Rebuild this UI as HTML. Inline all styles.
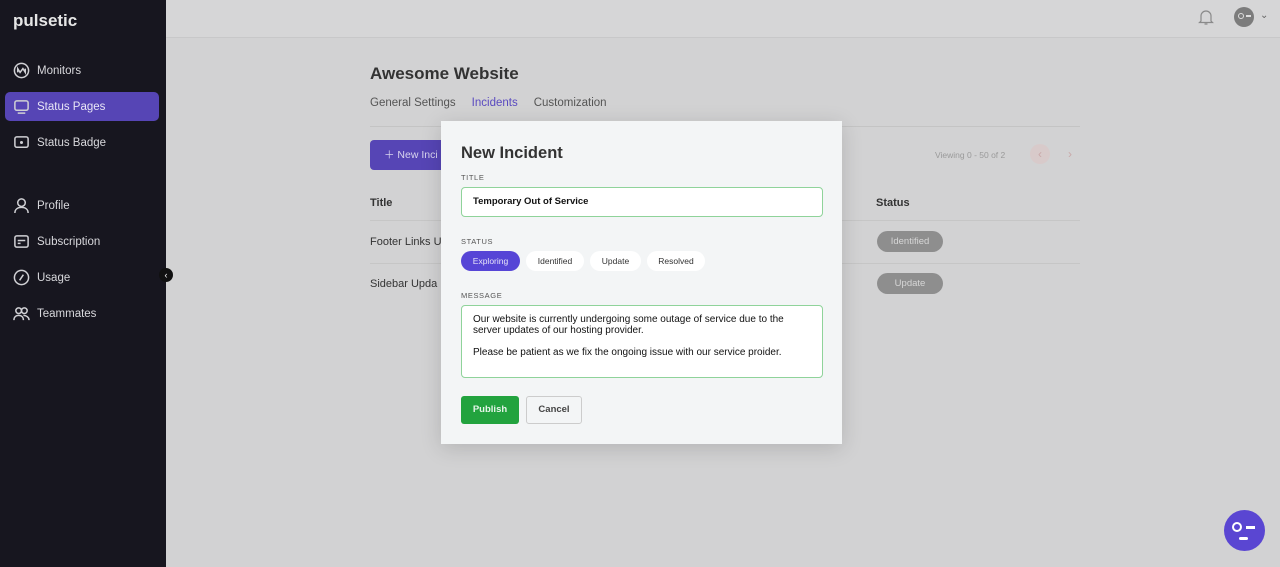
<!DOCTYPE html>
<html><head><style>
*{box-sizing:border-box;margin:0;padding:0}
body{width:1280px;height:567px;overflow:hidden;font-family:"Liberation Sans",sans-serif;background:#d2d2d3;position:relative}
.sb{position:absolute;left:0;top:0;width:166px;height:567px;background:#17161f;color:#d8d8dc}
.logo{position:absolute;left:13px;top:11px;font-size:17px;font-weight:bold;color:#e6e6e6}
.it{position:absolute;left:5px;width:154px;height:29px;border-radius:5px;font-size:11.5px;display:flex;align-items:center;padding-left:8px}
.it svg{width:17px;height:17px;margin-right:7px;fill:none;stroke:#d0d0d4;stroke-width:1.6}
.act{background:#5645b5;color:#e8e6f6}
.top{position:absolute;left:166px;top:0;right:0;height:38px;background:#d6d6d7;border-bottom:1px solid #c8c8c9}
.main{position:absolute;left:370px;color:#333}
.modal{position:absolute;left:441px;top:121px;width:401px;height:323px;background:#f3f5f6;box-shadow:0 4px 20px rgba(0,0,0,.15)}
.lbl{position:absolute;left:20px;font-size:7.5px;letter-spacing:.6px;color:#555}
.inp{position:absolute;left:20px;width:362px;border:1.5px solid #8fd39a;border-radius:4px;background:#fff;font-size:10px;color:#111;padding-left:11px}
.pill{position:absolute;top:130px;height:20px;border-radius:10px;background:#fff;font-size:8.5px;color:#333;display:flex;align-items:center;justify-content:center}
.gp{position:absolute;left:877px;width:66px;height:21px;border-radius:11px;background:#8e8e8e;color:#d6d6d6;font-size:9.5px;display:flex;align-items:center;justify-content:center}
</style></head><body>
<div class="sb">
<div class="logo">pulsetic</div>
<div class="it" style="top:56px"><svg viewBox="0 0 18 18"><circle cx="9" cy="9" r="7.5"/><path d="M5 11V7l2.5 4 3-4 2.5 4V7"/></svg>Monitors</div>
<div class="it act" style="top:92px"><svg viewBox="0 0 18 18"><rect x="2" y="3" width="14" height="10" rx="2"/><path d="M5 16h8"/></svg>Status Pages</div>
<div class="it" style="top:128px"><svg viewBox="0 0 18 18"><rect x="2" y="3" width="14" height="11" rx="2"/><circle cx="9" cy="9" r=".8"/></svg>Status Badge</div>
<div class="it" style="top:191px"><svg viewBox="0 0 18 18"><circle cx="9" cy="6" r="4"/><path d="M2 17c0-4 3-6 7-6s7 2 7 6"/></svg>Profile</div>
<div class="it" style="top:227px"><svg viewBox="0 0 18 18"><rect x="2" y="3" width="14" height="12" rx="2"/><path d="M5 8h8M5 11h3"/></svg>Subscription</div>
<div class="it" style="top:263px"><svg viewBox="0 0 18 18"><circle cx="9" cy="9" r="7.5"/><path d="M7 12l4-6"/></svg>Usage</div>
<div class="it" style="top:299px"><svg viewBox="0 0 18 18"><circle cx="6" cy="6" r="3"/><circle cx="12" cy="6" r="3"/><path d="M1 16c0-3 2-5 5-5s5 2 5 5M11 11c3 0 6 2 6 5"/></svg>Teammates</div>
</div>
<div style="position:absolute;left:159px;top:268px;width:14px;height:14px;border-radius:7px;background:#111;color:#fff;font-size:9px;text-align:center;line-height:14px">‹</div>
<div class="top"></div>
<svg style="position:absolute;left:1198px;top:8px" width="16" height="18" viewBox="0 0 16 18" fill="none" stroke="#8a8a8a" stroke-width="1.2"><path d="M3 13V8a5 5 0 0110 0v5l1.5 1.5h-13zM6.5 16h3"/></svg>
<div style="position:absolute;left:1234px;top:7px;width:20px;height:20px;border-radius:10px;background:#7c7c7c"></div>
<div style="position:absolute;left:1238px;top:13px;width:6px;height:6px;border-radius:3px;border:1.5px solid #ddd"></div>
<div style="position:absolute;left:1246px;top:15px;width:5px;height:1.5px;background:#ddd"></div>
<div style="position:absolute;left:1260px;top:10px;font-size:10px;color:#666">⌄</div>
<div class="main" style="top:64px;font-size:17px;font-weight:bold">Awesome Website</div>
<div class="main" style="top:97px;font-size:11.5px;color:#555">General Settings<span style="color:#5a4ac0;margin-left:16px">Incidents</span><span style="margin-left:16px">Customization</span></div>
<div style="position:absolute;left:370px;top:126px;width:710px;height:1px;background:#c4c4c4"></div>
<div style="position:absolute;left:370px;top:140px;width:80px;height:30px;background:#5645b5;border-radius:4px;color:#d8d4ee;font-size:10.5px;line-height:30px;padding-left:14px">＋ New Inci</div>
<div style="position:absolute;left:935px;top:150px;font-size:8.5px;color:#9a9a9a">Viewing 0 - 50 of 2</div>
<div style="position:absolute;left:1030px;top:144px;width:20px;height:20px;border-radius:10px;background:#d8caca;color:#c9a8a8;font-size:12px;text-align:center;line-height:20px">‹</div>
<div style="position:absolute;left:1060px;top:144px;width:20px;height:20px;color:#c9a8a8;font-size:12px;text-align:center;line-height:20px">›</div>
<div class="main" style="top:197px;font-size:11px;font-weight:bold">Title</div>
<div style="position:absolute;left:876px;top:197px;font-size:11px;font-weight:bold;color:#333">Status</div>
<div style="position:absolute;left:370px;top:220px;width:710px;height:1px;background:#c6c6c6"></div>
<div style="position:absolute;left:370px;top:263px;width:710px;height:1px;background:#c6c6c6"></div>
<div class="main" style="top:236px;font-size:11px">Footer Links U</div>
<div class="main" style="top:278px;font-size:11px">Sidebar Upda</div>
<div class="gp" style="top:231px">Identified</div>
<div class="gp" style="top:273px">Update</div>
<div class="modal">
<div style="position:absolute;left:20px;top:23px;font-size:16.5px;font-weight:bold;color:#333">New Incident</div>
<div class="lbl" style="top:52px">TITLE</div>
<div class="inp" style="top:66px;height:30px;line-height:28px;font-weight:bold;font-size:9.5px">Temporary Out of Service</div>
<div class="lbl" style="top:116px">STATUS</div>
<div class="pill" style="left:20px;width:59px;background:#5645d6;color:#e6e3f8">Exploring</div>
<div class="pill" style="left:85px;width:58px">Identified</div>
<div class="pill" style="left:149px;width:51px">Update</div>
<div class="pill" style="left:206px;width:58px">Resolved</div>
<div class="lbl" style="top:170px">MESSAGE</div>
<div class="inp" style="top:184px;height:73px;padding-top:8px;line-height:11px">Our website is currently undergoing some outage of service due to the<br>server updates of our hosting provider.<br><br>Please be patient as we fix the ongoing issue with our service proider.</div>
<div style="position:absolute;left:20px;top:275px;width:58px;height:28px;border-radius:3px;background:#22a33e;color:#e6f5e9;font-size:9.5px;font-weight:bold;text-align:center;line-height:28px">Publish</div>
<div style="position:absolute;left:85px;top:275px;width:56px;height:28px;border-radius:3px;border:1px solid #ccc;background:#f3f5f6;color:#444;font-size:9.5px;font-weight:bold;text-align:center;line-height:26px">Cancel</div>
</div>
<div style="position:absolute;left:1224px;top:510px;width:41px;height:41px;border-radius:21px;background:#5a46d2"></div>
<div style="position:absolute;left:1232px;top:522px;width:10px;height:10px;border-radius:5px;border:2.5px solid #fff"></div>
<div style="position:absolute;left:1246px;top:526px;width:9px;height:2.5px;background:#fff"></div>
<div style="position:absolute;left:1239px;top:537px;width:9px;height:2.5px;background:#fff;border-radius:2px"></div>
</body></html>
